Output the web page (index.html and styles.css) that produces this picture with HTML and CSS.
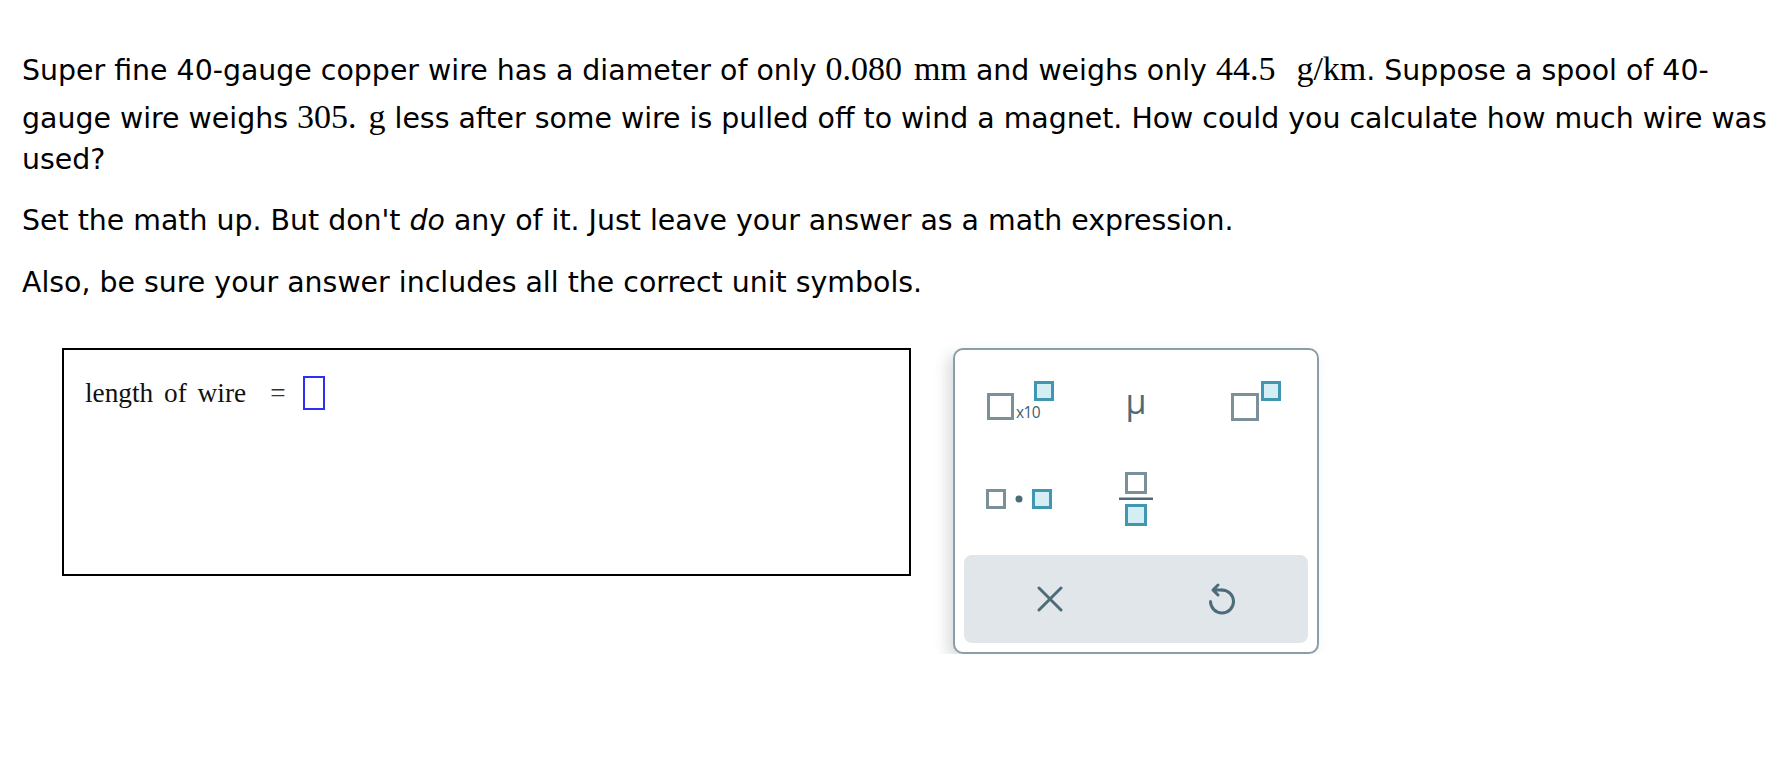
FILE: index.html
```html
<!DOCTYPE html>
<html>
<head>
<meta charset="utf-8">
<link rel="stylesheet" href="styles.css">
</head>
<body>
<div class="page">
  <div class="question">
    <p class="para first">
      <span class="qline l1">Super fine 40-gauge copper wire has a diameter of only <span class="m">0.080<span class="u">mm</span></span> and weighs only <span class="m">44.5<span class="u wide">g/km</span></span>. Suppose a spool of 40-</span>
      <span class="qline l2">gauge wire weighs <span class="m">305.<span class="u">g</span></span> less after some wire is pulled off to wind a magnet. How could you calculate how much wire was</span>
      <span class="qline l3">used?</span>
    </p>
    <p class="para second"><span class="qline">Set the math up. But don't <i>do</i> any of it. Just leave your answer as a math expression.</span></p>
    <p class="para third"><span class="qline">Also, be sure your answer includes all the correct unit symbols.</span></p>
  </div>
  <div class="answer-row">
    <div class="answer-box">
      <div class="eq">
        <span class="lhs">length of wire</span>
        <span class="eqsign">=</span>
        <span class="slot"></span>
      </div>
    </div>
    <div class="palette">
      <div class="keys">
        <div class="key k1">
          <svg width="68" height="41" viewBox="0 0 68 41">
            <rect x="1.5" y="13.5" width="24" height="24" class="sq-gray"/>
            <text x="29" y="37" class="x10">x10</text>
            <rect x="48.5" y="1.5" width="17" height="17" class="sq-blue"/>
          </svg>
        </div>
        <div class="key"><span class="mu">μ</span></div>
        <div class="key k3">
          <svg width="51" height="41" viewBox="0 0 51 41">
            <rect x="1.5" y="13.5" width="25" height="25" class="sq-gray"/>
            <rect x="31.5" y="1.5" width="17" height="17" class="sq-blue"/>
          </svg>
        </div>
        <div class="key k4">
          <svg width="67" height="20" viewBox="0 0 67 20">
            <rect x="1.5" y="1.5" width="17" height="17" class="sq-gray"/>
            <circle cx="33" cy="10" r="3.5" class="dot"/>
            <rect x="47.5" y="1.5" width="17" height="17" class="sq-blue"/>
          </svg>
        </div>
        <div class="key k5">
          <svg width="34" height="54" viewBox="0 0 34 54">
            <rect x="7.5" y="1.5" width="19" height="19" class="sq-gray"/>
            <rect x="0" y="25.5" width="34" height="2.5" class="bar"/>
            <rect x="7.5" y="33.5" width="19" height="19" class="sq-blue"/>
          </svg>
        </div>
        <div class="key"></div>
      </div>
      <div class="actions">
        <div class="act">
          <svg width="26" height="26" viewBox="0 0 26 26">
            <path d="M2 2 L24 24 M24 2 L2 24" class="stroke"/>
          </svg>
        </div>
        <div class="act">
          <svg width="28" height="34" viewBox="0 0 28 34">
            <path d="M14 8 H5 M10 3 L5 8 L10 13" class="stroke"/>
            <path d="M14 8 A11.5 11.5 0 1 1 2.5 19.5" class="stroke"/>
          </svg>
        </div>
      </div>
    </div>
  </div>
</div>
</body>
</html>
```
FILE: styles.css
```css
* { box-sizing: border-box; }
body {
  margin: 0;
  background: #fff;
  font-family: "DejaVu Sans", Verdana, sans-serif;
  font-size: 28.4px;
  color: #000;
}
.page {
  padding: 50px 0 0 22px;
}
.para {
  margin: 0;
}
.qline {
  display: block;
  height: 41px;
  line-height: 41px;
  white-space: nowrap;
}
.l2 {
  margin-top: 7px;
}
.second {
  margin-top: 20px;
}
.third {
  margin-top: 21px;
}
.m {
  font-family: "Liberation Serif", "Times New Roman", serif;
  font-size: 34px;
  line-height: 1;
}
.u {
  margin-left: 12px;
}
.u.wide {
  margin-left: 21px;
}
.answer-row {
  display: flex;
  align-items: flex-start;
  gap: 42px;
  margin-top: 45px;
  padding-left: 40px;
}
.answer-box {
  width: 849px;
  height: 228px;
  border: 2px solid #000;
  padding: 26px 0 0 21px;
}
.eq {
  display: flex;
  align-items: center;
  font-family: "Liberation Serif", "Times New Roman", serif;
  font-size: 27.3px;
  color: #111;
}
.lhs {
  word-spacing: 4px;
}
.eqsign {
  margin-left: 24px;
  margin-right: 17px;
  color: #333;
}
.slot {
  width: 22px;
  height: 34px;
  border: 2px solid #2e2ef5;
}
.palette {
  width: 366px;
  height: 306px;
  border: 2px solid #8a9ea7;
  border-radius: 10px;
  background: #fff;
  box-shadow: -6px 6px 14px rgba(50, 70, 80, 0.18);
  padding: 2px 9px 9px 9px;
  display: flex;
  flex-direction: column;
}
.keys {
  display: grid;
  grid-template-columns: repeat(3, 1fr);
  grid-template-rows: 98px 98px;
}
.key {
  display: flex;
  align-items: center;
  justify-content: center;
}
.k3 { padding-left: 12px; }
.k4 { padding-right: 4px; }
.sq-gray {
  fill: #fff;
  stroke: #7b9099;
  stroke-width: 3;
}
.sq-blue {
  fill: #d5eef4;
  stroke: #3f97b1;
  stroke-width: 3;
}
.dot { fill: #4d6b78; }
.bar { fill: #4d6b78; }
.x10 {
  font-family: "Open Sans", sans-serif;
  font-size: 15.5px;
  fill: #3f5d6a;
  letter-spacing: -0.6px;
}
.mu {
  font-family: "Open Sans", sans-serif;
  font-size: 34px;
  color: #4d6b78;
  line-height: 1;
}
.actions {
  margin-top: 7px;
  height: 88px;
  background: #e0e6e9;
  border-radius: 8px;
  display: grid;
  grid-template-columns: 1fr 1fr;
}
.act {
  display: flex;
  align-items: center;
  justify-content: center;
}
.stroke {
  fill: none;
  stroke: #4d6b78;
  stroke-width: 3;
  stroke-linecap: round;
  stroke-linejoin: round;
}
```
